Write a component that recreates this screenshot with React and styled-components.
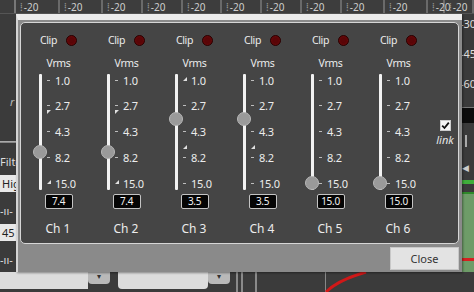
import React from 'react'
import styled, { createGlobalStyle } from 'styled-components'

const GlobalStyle = createGlobalStyle`
  html, body { margin: 0; padding: 0; background: #3a3a3a; overflow: hidden; }
  * { box-sizing: border-box; }
`

const TICKS = ['1.0', '2.7', '4.3', '8.2', '15.0']
const SLIDER_TOP = 73

const channels = [
  { name: 'Ch 1', value: '7.4', thumb: 152, marks: [null, 'below', null, null, 'on'] },
  { name: 'Ch 2', value: '7.4', thumb: 152, marks: [null, 'below', null, null, 'on'] },
  { name: 'Ch 3', value: '3.5', thumb: 119, marks: ['on', null, null, 'above', null] },
  { name: 'Ch 4', value: '3.5', thumb: 119, marks: [null, null, null, 'above', null] },
  { name: 'Ch 5', value: '15.0', thumb: 183, marks: [null, null, null, null, null] },
  { name: 'Ch 6', value: '15.0', thumb: 183, marks: [null, null, null, null, null] },
]

const topCells = [44, 43, 40, 40, 39, 40, 40, 40, 43, 43, 17, 29]

function App() {
  return (
    <>
      <GlobalStyle />
      <Screen>
        <TopStrip>
          <Corner />
          {topCells.map((w, i) => (
            <MeterCell key={i} style={{ width: w }}>
              <Dots>⁞</Dots>-20
            </MeterCell>
          ))}
        </TopStrip>

        <LeftStrip>
          <Italic>r</Italic>
          <DoubleRule />
          <SideLabel>Filter</SideLabel>
          <SideBox>High</SideBox>
          <SideLabel>-ıı-</SideLabel>
          <SideBox>45</SideBox>
          <SideLabel>-ıı-</SideLabel>
          <SideBox>12</SideBox>
        </LeftStrip>

        <Middle />

        <RightStrip>
          <Scale>-30</Scale>
          <Scale>-45</Scale>
          <Scale>-60</Scale>
          <BlackBox />
          <Bar />
          <Arrow>◀</Arrow>
          <GreenBar />
          <GreenField>
            <RedLine />
          </GreenField>
        </RightStrip>

        <BottomStrip>
          <LightBox $w={88} />
          <DropPiece>▾</DropPiece>
          <Gap $w={8} />
          <LightBox $w={90} $round />
          <DropPiece>▾</DropPiece>
          <VLine $ml={6} />
          <VLine $ml={3} />
          <VLine $ml={12} />
          <Plot>
            <svg width="130" height="20" viewBox="0 0 130 20">
              <path d="M68 20 Q80 8 108 0" stroke="#d01818" strokeWidth="3" fill="none" />
            </svg>
          </Plot>
        </BottomStrip>

        <Dialog>
          <Panel>
            {channels.map((ch) => (
              <Column key={ch.name}>
                <ClipRow>
                  <Label>Clip</Label>
                  <Led />
                </ClipRow>
                <VrmsLabel>Vrms</VrmsLabel>
                <Slider>
                  <Track />
                  <TickList>
                    {TICKS.map((t, i) => (
                      <TickRow key={t}>
                        <Mark $kind={ch.marks[i]} />
                        <TickText>{t}</TickText>
                      </TickRow>
                    ))}
                  </TickList>
                  <Thumb style={{ top: ch.thumb - SLIDER_TOP - 7 }} />
                </Slider>
                <ValueBox>{ch.value}</ValueBox>
                <ChLabel>{ch.name}</ChLabel>
              </Column>
            ))}
            <LinkCol>
              <Check>
                <svg width="9" height="9" viewBox="0 0 9 9">
                  <path d="M1.2 4.6 L3.5 7 L7.8 1.6" stroke="#111" strokeWidth="1.8" fill="none" />
                </svg>
              </Check>
              <LinkText>link</LinkText>
            </LinkCol>
          </Panel>
          <ButtonBar>
            <CloseButton>Close</CloseButton>
          </ButtonBar>
        </Dialog>
      </Screen>
    </>
  )
}

const Screen = styled.div`
  position: relative;
  width: 474px;
  height: 292px;
  overflow: hidden;
  background: #3b3b3b;
  display: grid;
  grid-template-columns: 16px 1fr 12px;
  grid-template-rows: 14px 1fr 20px;
  font-family: "Noto Sans", "Open Sans", sans-serif;
  color: #e8e8e8;
`

const TopStrip = styled.div`
  grid-column: 1 / 4;
  display: flex;
  background: #3d3d3d;
  border-bottom: 1px solid #555;
`

const Corner = styled.div`
  width: 60px;
  border-right: 2px solid #777;
`

const MeterCell = styled.div`
  display: flex;
  align-items: flex-end;
  gap: 1px;
  padding: 0 0 0 4px;
  font-size: 10px;
  line-height: 11px;
  color: #cfcfcf;
  border-right: 2px solid #6a6a6a;
  flex-shrink: 0;
`

const Dots = styled.span`
  color: #999;
`

const LeftStrip = styled.div`
  display: flex;
  flex-direction: column;
  overflow: hidden;
  padding-top: 80px;
  background: #3b3b3b;
`

const Italic = styled.div`
  font-style: italic;
  font-size: 11px;
  color: #bbb;
  padding-left: 10px;
  height: 14px;
`

const DoubleRule = styled.div`
  margin-top: 33px;
  height: 4px;
  border-top: 1px solid #aaa;
  border-bottom: 1px solid #888;
`

const SideLabel = styled.div`
  font-size: 11px;
  height: 20px;
  line-height: 20px;
  margin-top: 9px;
  white-space: nowrap;
  color: #ddd;
`

const SideBox = styled.div`
  height: 17px;
  margin-top: 3px;
  background: #e8e8e8;
  color: #222;
  font-size: 11px;
  line-height: 17px;
  padding-left: 2px;
  white-space: nowrap;
`

const Middle = styled.div``

const RightStrip = styled.div`
  display: flex;
  flex-direction: column;
  overflow: hidden;
  padding-top: 3px;
`

const Scale = styled.div`
  font-size: 11px;
  line-height: 14px;
  height: 30px;
  color: #ddd;
  margin-left: -2px;
`

const BlackBox = styled.div`
  height: 16px;
  background: #0c0c0c;
  border-top: 1px solid #777;
`

const Bar = styled.div`
  margin: 12px 0 0 3px;
  width: 2px;
  height: 12px;
  background: #aaa;
`

const Arrow = styled.div`
  margin-top: 14px;
  font-size: 9px;
  color: #ccc;
`

const GreenBar = styled.div`
  margin-top: 6px;
  height: 4px;
  background: #3fae3a;
`

const GreenField = styled.div`
  margin-top: 8px;
  flex: 1;
  background: #6e9c68;
  border-top: 2px solid #2f8a2a;
  padding-top: 64px;
`

const RedLine = styled.div`
  height: 3px;
  background: #d52020;
`

const BottomStrip = styled.div`
  grid-column: 1 / 4;
  display: flex;
  align-items: flex-start;
  background: #3b3b3b;
`

const LightBox = styled.div`
  width: ${(p) => p.$w}px;
  height: 17px;
  background: #dcdcdc;
  border-radius: ${(p) => (p.$round ? '0 0 4px 4px' : '0')};
`

const DropPiece = styled.div`
  width: 22px;
  height: 12px;
  background: #b9b9b9;
  border-radius: 0 0 4px 4px;
  font-size: 8px;
  line-height: 8px;
  text-align: center;
  color: #333;
`

const Gap = styled.div`
  width: ${(p) => p.$w}px;
`

const VLine = styled.div`
  width: 2px;
  height: 20px;
  margin-left: ${(p) => p.$ml}px;
  background: #8a8a8a;
`

const Plot = styled.div`
  flex: 1;
  height: 20px;
  border-left: 1px solid #888;
  margin-left: 68px;
  display: flex;
  svg { margin-left: -68px; }
`

const Dialog = styled.div`
  position: absolute;
  left: 16px;
  top: 14px;
  width: 446px;
  height: 258px;
  background: #8a8a8a;
  border-top: 6px solid #ececec;
  border-left: 2px solid #d4d4d4;
  padding: 2px 3px 2px 2px;
  display: flex;
  flex-direction: column;
  box-shadow: 1px 1px 2px rgba(0, 0, 0, 0.4);
`

const Panel = styled.div`
  height: 222px;
  background: #454545;
  border: 1px solid #d6d6d6;
  border-radius: 5px;
  padding: 0 0 0 3px;
  display: flex;
`

const Column = styled.div`
  width: 68px;
  display: flex;
  flex-direction: column;
  align-items: center;
  padding-top: 11px;
`

const ClipRow = styled.div`
  display: flex;
  align-items: center;
  gap: 9px;
  height: 12px;
  margin-left: 1px;
`

const Label = styled.div`
  font-size: 10.5px;
  line-height: 12px;
  letter-spacing: -0.4px;
  color: #ececec;
`

const VrmsLabel = styled(Label)`
  margin-top: 11px;
  margin-left: 1px;
`

const Led = styled.div`
  width: 11px;
  height: 11px;
  border-radius: 50%;
  background: #5a0507;
  border: 1px solid #2a0000;
  box-shadow: inset 0 0 2px #7a1010;
`

const Slider = styled.div`
  position: relative;
  align-self: stretch;
  height: 117px;
  margin-top: 4px;
`

const Track = styled.div`
  position: absolute;
  left: 15px;
  top: 1px;
  bottom: 0;
  width: 3px;
  background: #f2f2f2;
  border-radius: 1px;
`

const TickList = styled.div`
  display: flex;
  flex-direction: column;
  gap: 11.75px;
  margin-left: 22px;
`

const TickRow = styled.div`
  position: relative;
  display: flex;
  align-items: center;
  height: 14px;
`

const Mark = styled.div`
  position: relative;
  width: 3px;
  height: 1px;
  margin-left: 1px;
  background: ${(p) => (p.$kind === 'on' ? 'transparent' : '#bdbdbd')};
  &::after {
    content: '';
    display: ${(p) => (p.$kind ? 'block' : 'none')};
    position: absolute;
    left: 0;
    top: ${(p) => (p.$kind === 'below' ? 5 : p.$kind === 'above' ? -12 : -3)}px;
    width: 0;
    height: 0;
    border-left: ${(p) => (p.$kind === 'below' ? 'none' : '4px solid transparent')};
    border-right: ${(p) => (p.$kind === 'below' ? '4px solid transparent' : 'none')};
    border-bottom: ${(p) => (p.$kind === 'below' ? 'none' : '4px solid #e0e0e0')};
    border-top: ${(p) => (p.$kind === 'below' ? '4px solid #e0e0e0' : 'none')};
  }
`

const TickText = styled.span`
  margin-left: 5px;
  font-size: 11px;
  color: #ececec;
  letter-spacing: -0.3px;
`

const Thumb = styled.div`
  position: absolute;
  left: 9px;
  width: 14px;
  height: 14px;
  border-radius: 50%;
  background: #9a9a9a;
  border: 1px solid #b8b8b8;
`

const ValueBox = styled.div`
  margin-top: 4px;
  margin-left: 1px;
  width: 28px;
  height: 15px;
  background: #050505;
  border: 1px solid #c4c4c4;
  border-radius: 2px;
  font-size: 10px;
  line-height: 13px;
  text-align: center;
  color: #f2f2f2;
  letter-spacing: -0.3px;
`

const ChLabel = styled.div`
  margin-top: 11px;
  font-size: 12px;
  color: #ececec;
`

const LinkCol = styled.div`
  flex: 1;
  display: flex;
  flex-direction: column;
  align-items: center;
  padding-top: 97px;
`

const Check = styled.div`
  width: 11px;
  height: 11px;
  background: #f5f5f5;
  border: 1px solid #ccc;
  display: flex;
  align-items: center;
  justify-content: center;
`

const LinkText = styled.div`
  margin-top: 1px;
  font-size: 11px;
  font-style: italic;
  color: #e8e8e8;
`

const ButtonBar = styled.div`
  display: flex;
  justify-content: flex-end;
  padding-top: 3px;
`

const CloseButton = styled.button`
  width: 69px;
  height: 23px;
  background: #e3e3e3;
  border: 1px solid #c8c8c8;
  border-radius: 0;
  font-family: "Noto Sans", "Open Sans", sans-serif;
  font-size: 11px;
  color: #333;
  padding: 0;
`

export default App
